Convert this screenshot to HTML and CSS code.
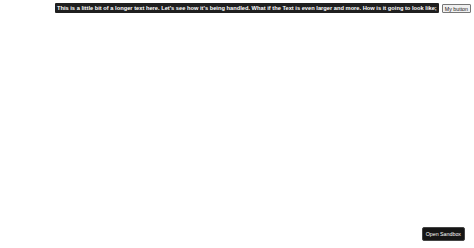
FILE: index.html
```html
<!DOCTYPE html>
<html>
<head>
<meta charset="utf-8">
<link rel="stylesheet" href="styles.css">
</head>
<body>
<div class="bar">
  <span class="label">This is a little bit of a longer text here. Let's see how it's being handled. What if the Text is even larger and more. How is it going to look like;</span>
  <button class="btn">My button</button>
</div>
<a class="sandbox">Open Sandbox</a>
</body>
</html>
```

FILE: styles.css
```css
html, body {
  margin: 0;
  padding: 0;
  background: #fff;
  font-family: "Liberation Sans", Arial, sans-serif;
}
.bar {
  display: flex;
  justify-content: flex-end;
  align-items: flex-start;
  gap: 3px;
  padding: 3px 3px 0 0;
}
.label {
  background: #1f1f1f;
  color: #fff;
  font-weight: bold;
  font-size: 5.72px;
  line-height: 10px;
  padding: 0 2px;
  border-radius: 1px;
  white-space: nowrap;
}
.btn {
  font-family: "Liberation Sans", Arial, sans-serif;
  font-size: 5.3px;
  height: 9px;
  padding: 0 2px;
  margin: 1px 0 0 0;
  background: #f0f0f0;
  color: #222;
  border: 1px solid #767676;
  border-radius: 1px;
}
.sandbox {
  position: fixed;
  right: 9px;
  bottom: 7px;
  background: #151515;
  color: #fff;
  font-size: 5.3px;
  line-height: 6px;
  padding: 3px 3px;
  border-radius: 2px;
  border: 1px solid #444;
}
```
